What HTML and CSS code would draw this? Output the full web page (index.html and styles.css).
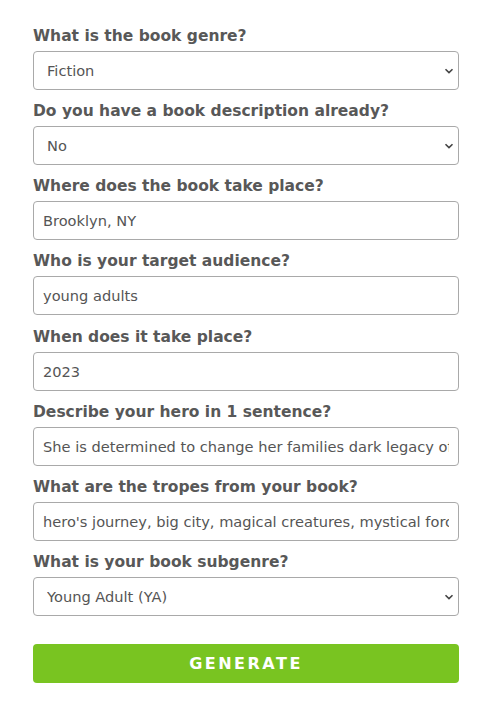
FILE: index.html
```html
<!DOCTYPE html>
<html lang="en">
<head>
    <meta charset="UTF-8">
    <meta name="viewport" content="width=device-width, initial-scale=1.0">
    <title>Book Generator</title>
    <link rel="stylesheet" href="styles.css">
</head>
<body>
    <form class="book-form" onsubmit="return false">
        <div class="field">
            <label for="genre">What is the book genre?</label>
            <div class="select-wrap">
                <select id="genre">
                    <option>Fiction</option>
                    <option>Non-Fiction</option>
                </select>
                <svg class="chevron" width="10" height="6" viewBox="0 0 10 6"><path d="M1.5 1.2 5 4.6 8.5 1.2" fill="none" stroke="#444" stroke-width="1.6"/></svg>
            </div>
        </div>

        <div class="field">
            <label for="hasDescription">Do you have a book description already?</label>
            <div class="select-wrap">
                <select id="hasDescription">
                    <option>No</option>
                    <option>Yes</option>
                </select>
                <svg class="chevron" width="10" height="6" viewBox="0 0 10 6"><path d="M1.5 1.2 5 4.6 8.5 1.2" fill="none" stroke="#444" stroke-width="1.6"/></svg>
            </div>
        </div>

        <div class="field">
            <label for="place">Where does the book take place?</label>
            <input type="text" id="place" value="Brooklyn, NY">
        </div>

        <div class="field">
            <label for="audience">Who is your target audience?</label>
            <input type="text" id="audience" value="young adults">
        </div>

        <div class="field">
            <label for="time">When does it take place?</label>
            <input type="text" id="time" value="2023">
        </div>

        <div class="field">
            <label for="hero">Describe your hero in 1 sentence?</label>
            <input type="text" id="hero" value="She is determined to change her families dark legacy of magic">
        </div>

        <div class="field">
            <label for="tropes">What are the tropes from your book?</label>
            <input type="text" id="tropes" value="hero's journey, big city, magical creatures, mystical forces">
        </div>

        <div class="field">
            <label for="subgenre">What is your book subgenre?</label>
            <div class="select-wrap">
                <select id="subgenre">
                    <option>Young Adult (YA)</option>
                    <option>Fantasy</option>
                </select>
                <svg class="chevron" width="10" height="6" viewBox="0 0 10 6"><path d="M1.5 1.2 5 4.6 8.5 1.2" fill="none" stroke="#444" stroke-width="1.6"/></svg>
            </div>
        </div>

        <button type="submit" class="generate-btn">GENERATE</button>
    </form>
</body>
</html>
```

FILE: styles.css
```css
body {
    margin: 0;
    padding: 0;
    background-color: #ffffff;
    font-family: "DejaVu Sans", sans-serif;
    color: #555555;
}

.book-form {
    padding: 27px 21px 0 33px;
}

.field {
    margin-bottom: 12.15px;
}

label {
    display: block;
    height: 24px;
    font-size: 15.5px;
    font-weight: bold;
    color: #585858;
}

input,
select {
    display: block;
    box-sizing: border-box;
    width: 100%;
    height: 39px;
    margin: 0;
    border: 1.5px solid #a9a9a9;
    border-radius: 4px;
    background: #ffffff;
    font-family: "DejaVu Sans", sans-serif;
    font-size: 14.6px;
    color: #555555;
    outline: none;
}

input {
    padding: 0 9px;
}

select {
    padding: 0 13px;
    appearance: none;
    -webkit-appearance: none;
}

.select-wrap {
    position: relative;
}

.chevron {
    position: absolute;
    right: 5px;
    top: 17px;
    pointer-events: none;
}

.generate-btn {
    display: block;
    width: 100%;
    height: 39px;
    margin-top: 28px;
    border: none;
    border-radius: 4px;
    background-color: #79c421;
    color: #ffffff;
    font-family: "DejaVu Sans", sans-serif;
    font-size: 16px;
    font-weight: bold;
    letter-spacing: 2.5px;
    cursor: pointer;
}
```
